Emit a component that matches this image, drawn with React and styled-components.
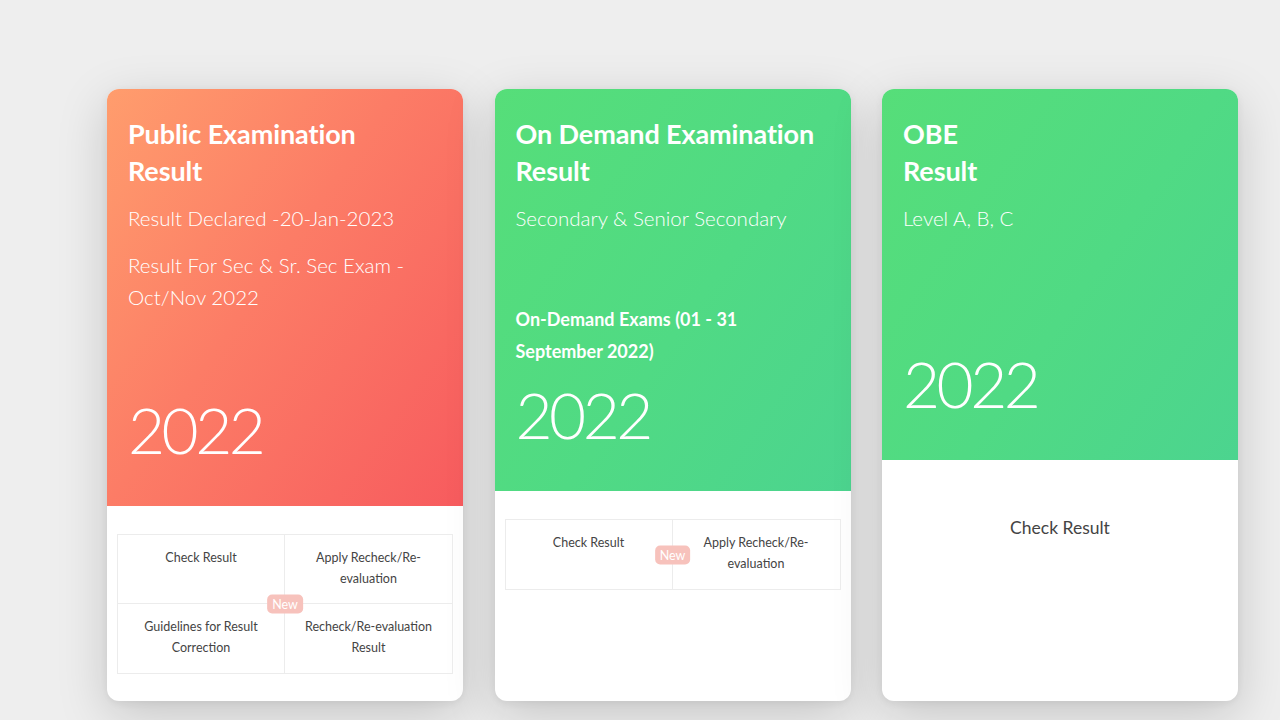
import React from 'react';
import styled, {createGlobalStyle} from "styled-components";

const GlobalStyle = createGlobalStyle`
html, body {
    margin:0;
    padding:0;
    background:#eeeeee;
    font-family: Lato, "Open Sans", sans-serif;
}
`;

const Page = styled.div`
display:flex;
gap:31.5px;
box-sizing:border-box;
height:720px;
padding:89px 0 0 107px;
background:#eeeeee;
overflow:hidden;
`;

const Card = styled.div`
display:flex;
flex-direction:column;
flex-shrink:0;
width:356px;
height:612px;
border-radius:12px;
background:#ffffff;
overflow:hidden;
box-shadow: 0 14px 50px rgba(0,0,0,0.17), 0 2px 8px rgba(0,0,0,0.06);
`;

const Header = styled.div`
display:flex;
flex-direction:column;
box-sizing:border-box;
height:${props => props.height}px;
padding:26px 21px 0 21px;
color:#ffffff;
background:${props => props.red
    ? "linear-gradient(125deg, #ff9d6d 0%, #fc7c66 45%, #f75b5e 100%)"
    : "linear-gradient(125deg, #56de79 0%, #50da84 55%, #4cd48f 100%)"};
`;

const Title = styled.h2`
margin:0;
font-size:27px;
line-height:37px;
font-weight:700;
letter-spacing:-0.1px;
`;

const SubText = styled.p`
margin:13px 0 0 0;
font-size:20.5px;
line-height:32px;
font-weight:300;
& + & {
    margin-top:15px;
}
`;

const Note = styled.p`
margin:auto 0 10px 0;
font-size:18px;
line-height:32px;
font-weight:700;
`;

const Year = styled.div`
margin-top:${props => props.after ? "0" : "auto"};
padding-bottom:38px;
font-size:64px;
line-height:76px;
font-weight:300;
letter-spacing:-3.5px;
`;

const Body = styled.div`
padding:28px 10px 0 10px;
`;

const LinkGrid = styled.div`
position:relative;
display:grid;
grid-template-columns:1fr 1fr;
border:1px solid #ececec;
`;

const LinkCell = styled.div`
box-sizing:border-box;
min-height:69px;
padding:12px 12px;
font-size:12.5px;
line-height:21px;
color:#444444;
text-align:center;
border-right:${props => props.right ? "none" : "1px solid #ececec"};
border-bottom:${props => props.last ? "none" : "1px solid #ececec"};
`;

const NewBadge = styled.span`
position:absolute;
top:50%;
left:50%;
transform:translate(-50%, -50%);
padding:1px 5px;
border-radius:5px;
background:#f7c2bc;
color:#ffffff;
font-size:12.5px;
line-height:17px;
`;

const SingleLink = styled.div`
padding-top:57px;
font-size:17.5px;
line-height:22px;
color:#444444;
text-align:center;
`;

export default function App() {
    return (
        <>
            <GlobalStyle/>
            <Page>
                <Card>
                    <Header red height={417}>
                        <Title>Public Examination<br/>Result</Title>
                        <SubText>Result Declared -20-Jan-2023</SubText>
                        <SubText>Result For Sec &amp; Sr. Sec Exam - Oct/Nov 2022</SubText>
                        <Year>2022</Year>
                    </Header>
                    <Body>
                        <LinkGrid>
                            <LinkCell>Check Result</LinkCell>
                            <LinkCell right>Apply Recheck/Re-evaluation</LinkCell>
                            <LinkCell last>Guidelines for Result Correction</LinkCell>
                            <LinkCell right last>Recheck/Re-evaluation Result</LinkCell>
                            <NewBadge>New</NewBadge>
                        </LinkGrid>
                    </Body>
                </Card>

                <Card>
                    <Header height={402}>
                        <Title>On Demand Examination<br/>Result</Title>
                        <SubText>Secondary &amp; Senior Secondary</SubText>
                        <Note>On-Demand Exams (01 - 31<br/>September 2022)</Note>
                        <Year after>2022</Year>
                    </Header>
                    <Body>
                        <LinkGrid>
                            <LinkCell last>Check Result</LinkCell>
                            <LinkCell right last>Apply Recheck/Re-evaluation</LinkCell>
                            <NewBadge>New</NewBadge>
                        </LinkGrid>
                    </Body>
                </Card>

                <Card>
                    <Header height={371}>
                        <Title>OBE<br/>Result</Title>
                        <SubText>Level A, B, C</SubText>
                        <Year>2022</Year>
                    </Header>
                    <SingleLink>Check Result</SingleLink>
                </Card>
            </Page>
        </>
    );
}
